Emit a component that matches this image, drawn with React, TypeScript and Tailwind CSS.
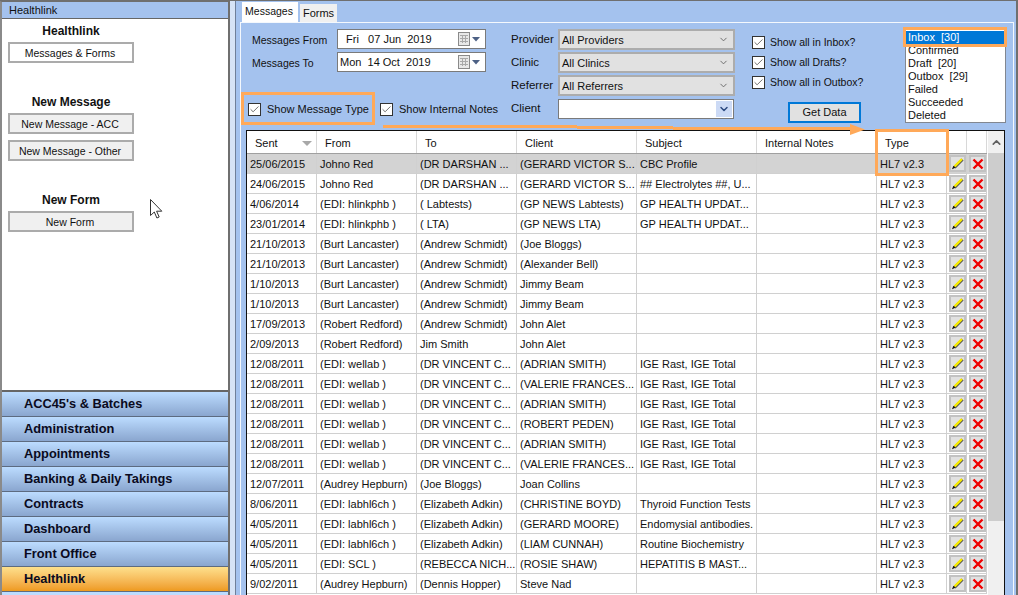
import type { ReactNode } from "react";
import { Check, ChevronDown, ChevronUp } from "lucide-react";

const font = "font-['Liberation_Sans',Arial,sans-serif]";

const rows = [
  ["25/06/2015", "Johno Red", "(DR DARSHAN ...", "(GERARD VICTOR S...", "CBC Profile"],
  ["24/06/2015", "Johno Red", "(DR DARSHAN ...", "(GERARD VICTOR S...", "## Electrolytes ##, U..."],
  ["4/06/2014", "(EDI: hlinkphb )", "( Labtests)", "(GP NEWS Labtests)", "GP HEALTH UPDAT..."],
  ["23/01/2014", "(EDI: hlinkphb )", "( LTA)", "(GP NEWS LTA)", "GP HEALTH UPDAT..."],
  ["21/10/2013", "(Burt Lancaster)", "(Andrew Schmidt)", "(Joe Bloggs)", ""],
  ["21/10/2013", "(Burt Lancaster)", "(Andrew Schmidt)", "(Alexander Bell)", ""],
  ["1/10/2013", "(Burt Lancaster)", "(Andrew Schmidt)", "Jimmy Beam", ""],
  ["1/10/2013", "(Burt Lancaster)", "(Andrew Schmidt)", "Jimmy Beam", ""],
  ["17/09/2013", "(Robert Redford)", "(Andrew Schmidt)", "John Alet", ""],
  ["2/09/2013", "(Robert Redford)", "Jim Smith", "John Alet", ""],
  ["12/08/2011", "(EDI: wellab )", "(DR VINCENT C...", "(ADRIAN SMITH)", "IGE Rast, IGE Total"],
  ["12/08/2011", "(EDI: wellab )", "(DR VINCENT C...", "(VALERIE FRANCES...", "IGE Rast, IGE Total"],
  ["12/08/2011", "(EDI: wellab )", "(DR VINCENT C...", "(ADRIAN SMITH)", "IGE Rast, IGE Total"],
  ["12/08/2011", "(EDI: wellab )", "(DR VINCENT C...", "(ROBERT PEDEN)", "IGE Rast, IGE Total"],
  ["12/08/2011", "(EDI: wellab )", "(DR VINCENT C...", "(ADRIAN SMITH)", "IGE Rast, IGE Total"],
  ["12/08/2011", "(EDI: wellab )", "(DR VINCENT C...", "(VALERIE FRANCES...", "IGE Rast, IGE Total"],
  ["12/07/2011", "(Audrey Hepburn)", "(Joe Bloggs)", "Joan Collins", ""],
  ["8/06/2011", "(EDI: labhl6ch )", "(Elizabeth Adkin)", "(CHRISTINE BOYD)", "Thyroid Function Tests"],
  ["4/05/2011", "(EDI: labhl6ch )", "(Elizabeth Adkin)", "(GERARD MOORE)", "Endomysial antibodies."],
  ["4/05/2011", "(EDI: labhl6ch )", "(Elizabeth Adkin)", "(LIAM CUNNAH)", "Routine Biochemistry"],
  ["4/05/2011", "(EDI: SCL )", "(REBECCA NICH...", "(ROSIE SHAW)", "HEPATITIS B MAST..."],
  ["9/02/2011", "(Audrey Hepburn)", "(Dennis Hopper)", "Steve Nad", ""],
];

const nav = ["ACC45's & Batches", "Administration", "Appointments", "Banking & Daily Takings", "Contracts", "Dashboard", "Front Office"];

function Tick() {
  return (
    <span className="flex h-[13px] w-[13px] shrink-0 items-center justify-center border border-[#333] bg-white">
      <Check size={11} strokeWidth={1.5} className="text-[#333]" />
    </span>
  );
}

function SideButton({ label, white }: { label: string; white?: boolean }) {
  return (
    <div className={`flex h-[21px] w-[126px] items-center justify-center border-2 border-[#ababab] pr-[2px] text-[10.5px] ${white ? "bg-white" : "bg-[#f0f0f0]"}`}>
      {label}
    </div>
  );
}

function DateBox({ text }: { text: string }) {
  return (
    <div className="flex h-[20px] w-[149px] items-center border border-[#7a7a7a] bg-white pl-[2px] pr-[5px]">
      <span className="flex-1 whitespace-pre">{text}</span>
      <svg width="22" height="14" viewBox="0 0 22 14">
        <rect x="0.5" y="0.5" width="11" height="13" fill="#e8e8e8" stroke="#8a8a8a" />
        <path d="M2 3.500h8M2 6.500h8M2 9.500h8M4.500 3v8M7.500 3v8" stroke="#a9a9a9" />
        <path d="M14 5h8l-4 4.500z" fill="#4d6185" />
      </svg>
    </div>
  );
}

function Select({ text }: { text: string }) {
  return (
    <div className="flex h-[21px] w-[177px] items-center border-2 border-[#acacac] bg-[#e1e1e1] pl-[2px] pr-[4px] text-[11px]">
      <span className="flex-1 pt-px">{text}</span>
      <ChevronDown size={11} className="text-[#666]" />
    </div>
  );
}

function FieldRow({ label, children }: { label: string; children: ReactNode }) {
  return (
    <div className="flex h-[21px] items-center">
      <span className="w-[47px] text-[11.5px]">{label}</span>
      {children}
    </div>
  );
}

function Pencil() {
  return (
    <svg width="13" height="13" viewBox="0 0 13 13">
      <path d="M3.500 10.500 11.500 2.500" stroke="#555" strokeWidth="3" />
      <path d="M3.500 9.500 11 2" stroke="#f9ec00" strokeWidth="2.400" />
      <path d="M1 12.200l1.400-3.400 2 2z" fill="#111" />
    </svg>
  );
}

function Cross() {
  return (
    <svg width="12" height="12" viewBox="0 0 12 12">
      <path d="M1.500 1.500l9 9M10.500 1.500l-9 9" stroke="#f00000" strokeWidth="2.400" />
    </svg>
  );
}

function GridButton({ children }: { children: ReactNode }) {
  return (
    <div className="flex h-full w-[20px] items-center border-r border-[#d0d0d0] pl-[2px]">
      <div className="flex h-[17px] w-[17px] items-center justify-center border-2 border-[#c2c2c2] bg-[#e1e1e1]">{children}</div>
    </div>
  );
}

function Table() {
  const cols = [70, 100, 100, 120, 120, 120, 70];
  const heads = ["Sent", "From", "To", "Client", "Subject", "Internal Notes", "Type"];
  return (
    <div className="ml-[5px] flex h-[465px] w-[759px] overflow-hidden border border-b-0 border-[#111] bg-white">
      <div className="w-[740px] shrink-0">
        <div className="flex h-[23px] border-b border-[#a0a0a0]">
          {heads.map((h, i) => (
            <div key={h} style={{ width: cols[i] }} className="flex shrink-0 items-center border-r border-[#d8d8d8] pl-[8px] pt-[2px]">
              <span className="flex-1">{h}</span>
              {i === 0 && <span className="mr-[4px] h-0 w-0 border-x-[5px] border-t-[5px] border-x-transparent border-t-[#a8a8a8]" />}
            </div>
          ))}
          <div className="w-[20px] shrink-0 border-r border-[#d8d8d8]" />
          <div className="w-[20px] shrink-0 border-r border-[#d8d8d8]" />
        </div>
        {rows.map((r, n) => (
          <div key={n} className={`flex h-[20px] border-b border-[#d0d0d0] ${n === 0 ? "bg-[#d3d3d3]" : ""}`}>
            {[...r, "", "HL7 v2.3"].map((c, i) => (
              <div key={i} style={{ width: cols[i] }} className="flex shrink-0 items-center whitespace-nowrap border-r border-[#d0d0d0] pl-[3px] pt-[2px]">
                {c}
              </div>
            ))}
            <GridButton><Pencil /></GridButton>
            <GridButton><Cross /></GridButton>
          </div>
        ))}
      </div>
      <div className="ml-px flex w-[16px] shrink-0 flex-col bg-[#f0f0f0]">
        <div className="flex h-[22px] items-center justify-center">
          <ChevronUp size={13} strokeWidth={3} className="text-[#606060]" />
        </div>
        <div className="h-[368px] bg-[#cdcdcd]" />
      </div>
    </div>
  );
}

function Filters() {
  return (
    <div className="flex h-[107px] pl-[11px] pt-[6px]">
      <div className="w-[259px]">
        <div className="flex h-[23px] items-start">
          <span className="w-[85px] pt-[4px] text-[10.5px]">Messages From</span>
          <DateBox text="  Fri   07 Jun  2019" />
        </div>
        <div className="flex h-[23px] items-start">
          <span className="w-[85px] pt-[4px] text-[10.5px]">Messages To</span>
          <DateBox text="Mon  14 Oct  2019" />
        </div>
        <div className="ml-[-4px] mt-[22px] flex h-[24px] items-center">
          <Tick />
          <span className="ml-[6px] w-[113px]">Show Message Type</span>
          <Tick />
          <span className="ml-[6px] whitespace-nowrap">Show Internal Notes</span>
        </div>
      </div>
      <div className="flex w-[241px] flex-col gap-[2px]">
        <FieldRow label="Provider"><Select text="All Providers" /></FieldRow>
        <FieldRow label="Clinic"><Select text="All Clinics" /></FieldRow>
        <FieldRow label="Referrer"><Select text="All Referrers" /></FieldRow>
        <FieldRow label="Client">
          <div className="flex h-[20px] w-[176px] items-center justify-end border border-[#7a7a7a] bg-white p-px">
            <span className="flex h-full w-[16px] items-center justify-center bg-[#ccdaf5]">
              <ChevronDown size={12} strokeWidth={3} className="text-[#2c4a80]" />
            </span>
          </div>
        </FieldRow>
      </div>
      <div className="w-[153px] pt-[3px] text-[10.5px]">
        <div className="flex h-[20px] items-center gap-[5px]"><Tick /><span className="pt-px">Show all in Inbox?</span></div>
        <div className="flex h-[20px] items-center gap-[5px]"><Tick /><span className="pt-px">Show all Drafts?</span></div>
        <div className="flex h-[20px] items-center gap-[5px]"><Tick /><span className="pt-px">Show all in Outbox?</span></div>
        <div className="ml-[36px] mt-[10px] flex h-[21px] w-[73px] items-center justify-center border-2 border-[#0078d7] bg-[#e1e1e1] text-[11px]">Get Data</div>
      </div>
      <div className="mt-[-1px] h-[95px] w-[101px] whitespace-pre border border-[#828790] bg-white pt-[2px] leading-[13px]">
        <div className="bg-[#0078d7] pl-[2px] text-white">Inbox  [30]</div>
        <div className="pl-[2px]">Confirmed</div>
        <div className="pl-[2px]">Draft  [20]</div>
        <div className="pl-[2px]">Outbox  [29]</div>
        <div className="pl-[2px]">Failed</div>
        <div className="pl-[2px]">Succeeded</div>
        <div className="pl-[2px]">Deleted</div>
      </div>
    </div>
  );
}

export default function App() {
  return (
    <div className={`${font} relative flex h-[595px] w-[1018px] overflow-hidden border-r-2 border-t border-[#6f6f6f] bg-[#a4c2ee] text-[11px] text-[#111]`}>
      {/* left panel */}
      <div className="flex w-[230px] shrink-0 flex-col border-x-2 border-t border-l-[#8a8a8a] border-r-[#6f6f6f] border-t-[#6f6f6f]">
        <div className="flex h-[17px] shrink-0 items-center border-b border-[#666] bg-[#a4c2ee] pl-[7px]">Healthlink</div>
        <div className="flex h-[373px] shrink-0 flex-col border-b-2 border-[#666] bg-white pl-[6px] text-center text-[12px] font-bold leading-[14px]">
          <div className="mt-[5px] w-[126px]">Healthlink</div>
          <div className="mt-[4px] font-normal"><SideButton label="Messages & Forms" white /></div>
          <div className="mt-[32px] w-[126px]">New Message</div>
          <div className="mt-[4px] font-normal"><SideButton label="New Message - ACC" /></div>
          <div className="mt-[6px] font-normal"><SideButton label="New Message - Other" /></div>
          <div className="mt-[32px] w-[126px]">New Form</div>
          <div className="mt-[4px] font-normal"><SideButton label="New Form" /></div>
        </div>
        {nav.map((n) => (
          <div key={n} className="flex h-[25px] shrink-0 items-center border-b border-[#5d6b80] bg-gradient-to-b from-[#bcdcff] to-[#8aa6cf] pl-[22px] text-[12.8px] font-bold text-[#0a0a20]">
            {n}
          </div>
        ))}
        <div className="flex h-[25px] shrink-0 items-center border-b border-[#5d6b80] bg-gradient-to-b from-[#fde08c] to-[#ee9a1c] pl-[22px] text-[12.8px] font-bold text-[#0a0a20]">
          Healthlink
        </div>
        <div className="h-[4px] bg-[#bcdcff]" />
      </div>
      <div className="w-[6px] shrink-0 border-r border-[#6f7f99] bg-[#d6e3f6]" />
      {/* right side */}
      <div className="w-[780px] pl-[4px]">
        <div className="flex h-[21px] items-end pl-[2px]">
          <div className="flex h-[20px] w-[56px] items-center justify-center bg-white pr-[2px] text-[10.5px]">Messages</div>
          <div className="ml-[2px] flex h-[18px] w-[37px] items-center justify-center bg-[#f0f0f0]">Forms</div>
        </div>
        <div className="h-[575px] w-[774px] border-x border-t border-[#f4f8fd]">
          <Filters />
          <Table />
        </div>
      </div>

      {/* annotations */}
      <div className="absolute left-[241px] top-[91px] h-[33px] w-[134px] border-[3px] border-[#ffa959]" />
      <div className="absolute left-[903px] top-[26px] h-[20px] w-[104px] border-[3px] border-[#ffa959]" />
      <div className="absolute left-[875px] top-[128px] h-[47px] w-[74px] border-[3px] border-[#ffa959]" />
      <div className="absolute left-[383px] top-[124px] h-[3px] w-[194px] bg-[#ffa959]" />
      <div className="absolute left-[577px] top-[125px] h-[3px] w-[96px] bg-[#ffa959]" />
      <div className="absolute left-[673px] top-[126px] h-[3px] w-[178px] bg-[#ffa959]" />
      <svg className="absolute left-[850px] top-[123px]" width="15" height="11" viewBox="0 0 15 11">
        <path d="M0 0l15 5.500-15 5.500z" fill="#ffa959" />
      </svg>
      {/* mouse pointer */}
      <svg className="absolute left-[150px] top-[198px]" width="13" height="20" viewBox="0 0 13 20">
        <path d="M.5.500V16.500L4.300 13l2.600 6 2.300-1-2.600-5.800h5.200z" fill="#fff" stroke="#333" strokeWidth="1" />
      </svg>
    </div>
  );
}
